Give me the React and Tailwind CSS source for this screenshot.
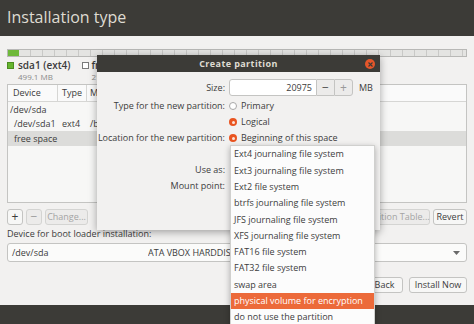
import React from 'react';

const fileSystems = [
  'Ext4 journaling file system',
  'Ext3 journaling file system',
  'Ext2 file system',
  'btrfs journaling file system',
  'JFS journaling file system',
  'XFS journaling file system',
  'FAT16 file system',
  'FAT32 file system',
  'swap area',
  'physical volume for encryption',
  'do not use the partition'
];

const Radio = ({ checked, label }) => (
  <div className="flex items-center gap-[4px]">
    {checked ? (
      <span className="w-[8px] h-[8px] rounded-full bg-[#e95420] flex items-center justify-center">
        <span className="w-[3px] h-[3px] rounded-full bg-[#fbe3d8]" />
      </span>
    ) : (
      <span className="w-[8px] h-[8px] rounded-full border border-[#a8a8a8] bg-white" />
    )}
    <span>{label}</span>
  </div>
);

const Row = ({ label, children, className = '' }) => (
  <div className={`flex items-center h-[16px] ${className}`}>
    <div className="w-[132px] text-right pr-[4px]">{label}</div>
    <div className="flex-1 flex items-center">{children}</div>
  </div>
);

const App = () => {
  return (
    <div
      className="relative w-[474px] h-[324px] overflow-hidden bg-[#f2f1f0] flex flex-col text-[9px] text-[#3c3c3c] whitespace-nowrap"
      style={{ fontFamily: '"Open Sans", "Noto Sans", sans-serif' }}
    >
      {/* header */}
      <div className="h-[36px] bg-[#3c3b37] flex items-center px-[7px] pb-[2px]">
        <span className="text-[16px] text-[#dfdbd2]">Installation type</span>
      </div>

      {/* main */}
      <div className="flex-1 flex flex-col px-[7px] pt-[13px]">
        {/* partition bar */}
        <div className="h-[8px] w-[460px] border border-[#b8b8b6] bg-[#e4e4e2] flex overflow-hidden">
          <div className="w-[11px] bg-[#6fb93a]" />
          <div
            className="flex-1"
            style={{
              backgroundImage:
                'repeating-linear-gradient(to right, transparent 0, transparent 11px, #c9c9c7 11px, #c9c9c7 12px)'
            }}
          />
        </div>

        {/* legend */}
        <div className="mt-[3px] h-[22px] flex gap-[11px]">
          <div className="flex gap-[4px]">
            <span className="mt-[2px] w-[7px] h-[7px] bg-[#66b52e] border border-[#4c8d20]" />
            <div className="flex flex-col leading-[11px]">
              <span className="text-[10px] font-semibold text-[#3c3c3c]">sda1 (ext4)</span>
              <span className="text-[8px] text-[#8a8a8a]">499.1 MB</span>
            </div>
          </div>
          <div className="flex gap-[3px]">
            <span className="mt-[2px] w-[7px] h-[7px] border border-[#7a7a7a] bg-white" />
            <div className="flex flex-col leading-[11px]">
              <span className="text-[10px] font-semibold">free space</span>
              <span className="text-[8px] text-[#8a8a8a]">21.5 GB</span>
            </div>
          </div>
        </div>

        {/* table */}
        <div className="mt-[2px] h-[119px] w-[460px] border border-[#c4c4c2] bg-[#f7f7f6] flex flex-col">
          <div className="h-[17px] flex items-center bg-[#fafafa] border-b border-[#d6d6d4]">
            <div className="w-[50px] h-full flex items-center pl-[5px] border-r border-[#d6d6d4]">Device</div>
            <div className="w-[29px] h-full flex items-center pl-[4px] border-r border-[#d6d6d4]">Type</div>
            <div className="w-[60px] h-full flex items-center pl-[3px] border-r border-[#d6d6d4]">Mount point</div>
            <div className="w-[50px] h-full flex items-center pl-[4px] border-r border-[#d6d6d4]">Format?</div>
            <div className="w-[50px] h-full flex items-center pl-[4px] border-r border-[#d6d6d4]">Size</div>
            <div className="flex-1 h-full flex items-center pl-[4px]">Used</div>
          </div>
          <div className="h-[14px] flex items-center pl-[2px] mt-[1px]">/dev/sda</div>
          <div className="h-[14px] flex items-center">
            <div className="w-[50px] pl-[6px]">/dev/sda1</div>
            <div className="w-[29px] pl-[4px]">ext4</div>
            <div className="w-[60px] pl-[3px]">/boot</div>
          </div>
          <div className="h-[15px] flex items-center pl-[6px] bg-[#dcdcda]">free space</div>
        </div>

        {/* buttons under table */}
        <div className="mt-[6px] h-[16px] flex items-stretch gap-[3px]">
          <div className="w-[16px] border border-[#c4c4c2] rounded-[3px] bg-[#f7f7f6] flex items-center justify-center text-[12px] text-[#3c3c3c]">+</div>
          <div className="w-[16px] border border-[#d4d4d2] rounded-[3px] bg-[#ecebea] flex items-center justify-center text-[12px] text-[#9a9a9a]">−</div>
          <div className="w-[43px] border border-[#d4d4d2] rounded-[3px] bg-[#ecebea] flex items-center justify-center text-[#a4a4a4]">Change...</div>
          <div className="flex-1" />
          <div className="w-[90px] border border-[#d4d4d2] rounded-[3px] bg-[#ecebea] flex items-center justify-center text-[#a4a4a4]">New Partition Table...</div>
          <div className="w-[34px] border border-[#c4c4c2] rounded-[3px] bg-[#f7f7f6] flex items-center justify-center">Revert</div>
        </div>

        <div className="mt-[3px] h-[12px] flex items-center">Device for boot loader installation:</div>

        {/* boot loader combo */}
        <div className="mt-[3px] h-[19px] w-[460px] border border-[#c4c4c2] rounded-[3px] bg-[#fbfbfa] flex items-center px-[4px]">
          <span className="w-[136px]">/dev/sda</span>
          <span className="w-[83px] overflow-hidden">ATA VBOX HARDDISK</span>
          <span className="flex-1" />
          <svg width="7" height="4" viewBox="0 0 7 4" className="mr-[2px]">
            <path d="M0 0 L7 0 L3.5 4 Z" fill="#6a6a6a" />
          </svg>
        </div>

        {/* nav buttons */}
        <div className="mt-[15px] h-[16px] flex justify-end gap-[6px]">
          <div className="w-[37px] border border-[#c4c4c2] rounded-[3px] bg-[#f7f7f6] flex items-center justify-center">Back</div>
          <div className="w-[58px] border border-[#c4c4c2] rounded-[3px] bg-[#f7f7f6] flex items-center justify-center">Install Now</div>
        </div>
      </div>

      {/* footer */}
      <div className="h-[19px] bg-[#3c3b37]" />

      {/* dialog */}
      <div className="absolute left-[97px] top-[55px] w-[283px] h-[175px] bg-[#f2f1f0] shadow-[0_2px_8px_rgba(0,0,0,0.35)] flex flex-col">
        <div className="h-[17px] bg-[#3c3b37] relative flex items-center justify-center">
          <span className="text-[9px] font-bold text-[#dfdbd2] tracking-[0.4px]">Create partition</span>
          <div className="absolute right-[5px] top-[4px] w-[10px] h-[10px] rounded-full bg-[#e5562a] flex items-center justify-center">
            <svg width="5" height="5" viewBox="0 0 5 5">
              <path d="M0.5 0.5 L4.5 4.5 M4.5 0.5 L0.5 4.5" stroke="#3c3b37" strokeWidth="1.1" />
            </svg>
          </div>
        </div>

        <div className="flex flex-col pt-[7px]">
          <div className="flex items-center h-[17px]">
            <div className="w-[132px] text-right pr-[4px]">Size:</div>
            <div className="w-[88px] h-full bg-white border border-[#c4c4c2] rounded-l-[3px] flex items-center justify-end pr-[4px]">20975</div>
            <div className="w-[17px] h-full border-y border-[#c4c4c2] bg-[#ecebea] flex items-center justify-center text-[12px] text-[#4a4a4a]">−</div>
            <div className="w-[19px] h-full border border-[#c4c4c2] rounded-r-[3px] bg-[#ecebea] flex items-center justify-center text-[12px] text-[#9a9a9a]">+</div>
            <div className="pl-[6px]">MB</div>
          </div>
          <Row label="Type for the new partition:" className="mt-[2px]">
            <Radio label="Primary" />
          </Row>
          <Row label="">
            <Radio checked label="Logical" />
          </Row>
          <Row label="Location for the new partition:">
            <Radio checked label="Beginning of this space" />
          </Row>
          <Row label="" />
          <Row label="Use as:" />
          <Row label="Mount point:" />
        </div>
      </div>

      {/* dropdown list */}
      <div className="absolute left-[230px] top-[145px] w-[145px] bg-[#fcfcfc] border border-[#d0d0ce] shadow-[0_2px_6px_rgba(0,0,0,0.3)] flex flex-col">
        {fileSystems.map((fs) => (
          <div
            key={fs}
            className={
              fs === 'physical volume for encryption'
                ? 'h-[16.3px] flex items-center pl-[3px] bg-[#ec6a3a] text-white'
                : 'h-[16.3px] flex items-center pl-[3px]'
            }
          >
            {fs}
          </div>
        ))}
      </div>
    </div>
  );
};

export default App;
